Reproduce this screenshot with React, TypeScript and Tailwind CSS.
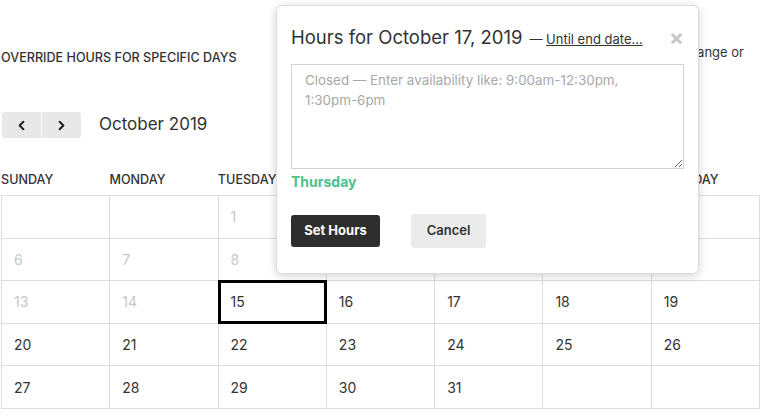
import { ChevronLeft, ChevronRight } from "lucide-react";

const DAYS = ["Sunday", "Monday", "Tuesday", "Wednesday", "Thursday", "Friday", "Saturday"];

// October 2019 starts on a Tuesday
const CELLS: (number | null)[] = [
  null, null,
  ...Array.from({ length: 31 }, (_, i) => i + 1),
  null, null,
];

const PAST = 14;
const SELECTED = 15;

function DayCell({ day }: { day: number | null }) {
  const past = day !== null && day <= PAST;
  return (
    <div className="relative flex h-[42.6px] items-center border-r border-b border-[#dedede] pl-[12px] text-[14px]">
      {day !== null && (
        <span className={past ? "text-[#c8c8c8]" : "text-[#333]"}>{day}</span>
      )}
      {day === SELECTED && (
        <div className="absolute -top-[1px] -left-[1px] -right-[1px] -bottom-[1px] border-[3px] border-black" />
      )}
    </div>
  );
}

function HoursPopup() {
  return (
    <div className="absolute left-[276px] top-[5px] flex h-[269px] w-[423px] flex-col rounded-[6px] border border-[#dcdcdc] bg-white px-[14px] shadow-[0_2px_10px_rgba(0,0,0,0.18)]">
      <div className="mt-[19px] flex items-center justify-between">
        <div className="flex items-baseline gap-[7px]">
          <span className="text-[18.5px] leading-[24px] text-[#333]">Hours for October 17, 2019</span>
          <span className="text-[13px] text-[#333]">
            — <span className="underline">Until end date...</span>
          </span>
        </div>
        <span className="text-[22px] font-bold leading-none text-[#c8c8c8]">×</span>
      </div>
      <textarea
        className="mt-[14px] h-[105px] w-[393px] resize-y border border-[#d4d4d4] px-[13px] pt-[5px] text-[13.4px] leading-[20px] text-[#333] outline-none placeholder:text-[#a8a8a8]"
        placeholder="Closed — Enter availability like: 9:00am-12:30pm, 1:30pm-6pm"
      />
      <div className="mt-[3px] text-[14px] font-bold leading-[20px] text-[#4cc28e]">Thursday</div>
      <div className="mt-[22px] flex items-center gap-[31px]">
        <button className="h-[32px] w-[89px] rounded-[3px] bg-[#2e2e2e] text-[13px] font-bold text-white">
          Set Hours
        </button>
        <button className="h-[34px] w-[75px] rounded-[3px] bg-[#ebebeb] text-[13px] font-semibold text-[#333]">
          Cancel
        </button>
      </div>
    </div>
  );
}

export default function App() {
  return (
    <div
      className="relative h-[418px] w-[768px] overflow-hidden bg-white text-[#333]"
      style={{ fontFamily: "Inter, 'Noto Sans', sans-serif" }}
    >
      <div className="ml-[1px] flex flex-col">
        <div className="mt-[46px] flex h-[20px] items-start justify-between pr-[24px]">
          <h2 className="mt-[4px] text-[12.6px] font-medium leading-[16px] text-[#333]">
            OVERRIDE HOURS FOR SPECIFIC DAYS
          </h2>
          <p className="-mt-[3px] text-[13px] leading-[18px] text-[#333]">
            Click a day on the calendar below to change or
          </p>
        </div>

        <div className="mt-[46px] flex h-[26px] items-center">
          <div className="ml-[1px] flex h-[26px] overflow-hidden rounded-[3px]">
            <button className="flex w-[39px] items-center justify-center bg-[#e8e8e8] text-[#222]">
              <ChevronLeft size={15} strokeWidth={3.2} />
            </button>
            <div className="w-[1px] bg-white" />
            <button className="flex w-[39px] items-center justify-center bg-[#e8e8e8] text-[#222]">
              <ChevronRight size={15} strokeWidth={3.2} />
            </button>
          </div>
          <span className="ml-[18px] text-[17px] text-[#333]">October 2019</span>
        </div>

        <div className="mt-[34px] grid w-[759px] grid-cols-7">
          {DAYS.map((d) => (
            <div key={d} className="text-[12.6px] font-medium uppercase leading-[16px] text-[#333]">
              {d}
            </div>
          ))}
        </div>

        <div className="mt-[7px] grid w-[759px] grid-cols-7 border-t border-l border-[#dedede]">
          {CELLS.map((day, i) => (
            <DayCell key={i} day={day} />
          ))}
        </div>
      </div>

      <HoursPopup />
    </div>
  );
}
